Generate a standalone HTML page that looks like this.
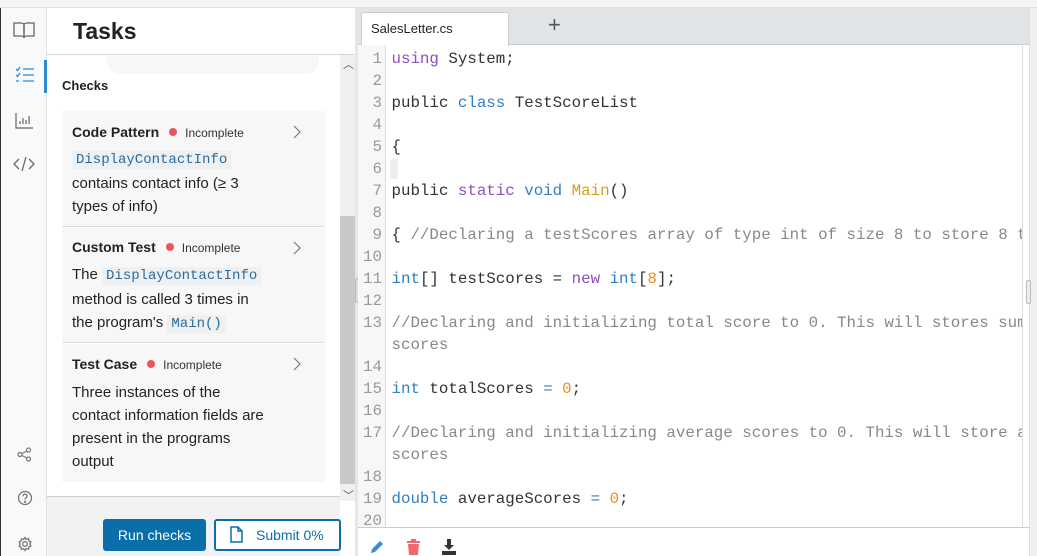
<!DOCTYPE html>
<html><head><style>
*{box-sizing:border-box;margin:0;padding:0}
body{width:1037px;height:556px;overflow:hidden;background:#f4f4f4;font-family:"Liberation Sans",sans-serif;position:relative;color:#222}
.abs{position:absolute}
.rail{left:0;top:8px;width:47px;height:548px;background:#f8f9fa;border-left:1px solid #333;border-right:1px solid #e2e2e2}
.panel{left:47px;top:8px;width:308px;height:548px;background:#fff}
.hdr{left:0;top:0;width:308px;height:47px;border-bottom:1px solid #d6d6d6;background:#fff}
.card{left:15px;width:263px;background:#f7f7f7}
.ct{font-weight:bold;font-size:14px;color:#222}
.dot{display:inline-block;width:8px;height:8px;border-radius:50%;background:#e8585a;margin:0 8px 0 10px;vertical-align:1px}
.inc{font-size:12px;font-weight:normal;color:#333}
.body{font-size:15px;line-height:23px;color:#222}
code{font-family:"Liberation Mono",monospace;font-size:14px;color:#2a6b9c;background:#eef0f2;padding:1px 4px}
.chev{position:absolute;left:231px;top:14px}
.ed{left:358px;top:8px;width:679px;height:548px;background:#fff}
.tabs{left:0;top:0;width:671px;height:37px;background:#e1e4e7;border-bottom:1px solid #ccc}
.tab{left:3px;top:4px;width:148px;height:34px;background:#fff;border:1px solid #ccc;border-bottom:none;border-radius:3px 3px 0 0;font-size:13px;padding:8px 0 0 9px;color:#222}
.code{left:-4px;top:40px;font-family:"Liberation Mono",monospace;font-size:15.8px;line-height:22px;white-space:pre}
.ln{width:28px;text-align:right;color:#999;display:inline-block}
.gut{left:0;top:37px;width:28px;height:482px;background:#f7f7f7;border-right:1px solid #ddd}
.k1{color:#8e4fbf}.k2{color:#2f7fc2}.fn{color:#d3a015}.nm{color:#f08a24}.cm{color:#888}.tx{color:#333}
</style></head><body>
<div class="abs" style="left:0;top:0;width:1037px;height:8px;background:#f4f4f4;border-bottom:1px solid #e0e0e0"></div>
<div class="abs rail">
<svg class="abs" style="left:12px;top:12px" width="22" height="20" viewBox="0 0 22 20" fill="none" stroke="#666" stroke-width="1.3"><path d="M1 3h7c2 0 3 1 3 2v13c0-1-1-2-3-2H1z"/><path d="M21 3h-7c-2 0-3 1-3 2v13c0-1 1-2 3-2h7z"/></svg>
<div class="abs" style="left:43px;top:52px;width:3px;height:33px;background:#2f8ad0"></div>
<svg class="abs" style="left:14px;top:58px" width="20" height="18" viewBox="0 0 20 18" fill="none" stroke="#2f8ad0" stroke-width="1.3"><path d="M1 3l1.5 1.5L5 1M1 9l1.5 1.5L5 7M1 15h3M8 3h11M8 9h11M8 15h11"/></svg>
<svg class="abs" style="left:14px;top:104px" width="19" height="17" viewBox="0 0 19 17" fill="none" stroke="#666" stroke-width="1.2"><path d="M1 1v15h17M5 12V9M8 12V6M11 12V8M14 12V4"/></svg>
<svg class="abs" style="left:12px;top:148px" width="22" height="16" viewBox="0 0 22 16" fill="none" stroke="#666" stroke-width="1.3"><path d="M6 3L1 8l5 5M16 3l5 5-5 5M13 1L9 15"/></svg>
<svg class="abs" style="left:16px;top:439px" width="15" height="15" viewBox="0 0 15 15" fill="none" stroke="#777" stroke-width="1.2"><circle cx="3" cy="7.5" r="2"/><circle cx="11.5" cy="3" r="2"/><circle cx="11.5" cy="12" r="2"/><path d="M5 6.5l5-2.5M5 8.5l5 2.5"/></svg>
<svg class="abs" style="left:16px;top:482px" width="16" height="16" viewBox="0 0 16 16" fill="none" stroke="#777" stroke-width="1.3"><circle cx="8" cy="8" r="6.5"/><path d="M6 6.3a2 2 0 1 1 2.5 1.8c-.5.2-.5.6-.5 1.4"/><circle cx="8" cy="11.8" r=".5" fill="#777"/></svg>
<svg class="abs" style="left:16px;top:528px" width="16" height="16" viewBox="0 0 16 16" fill="none" stroke="#777" stroke-width="1.3"><circle cx="8" cy="8" r="2.3"/><path d="M8 1.5l1.3 1.8 2.2-.6.4 2.2 2 1-1 2 1 2-2 1-.4 2.2-2.2-.6L8 14.5l-1.3-1.8-2.2.6-.4-2.2-2-1 1-2-1-2 2-1 .4-2.2 2.2.6z"/></svg>
</div>
<div class="abs panel">
<div class="abs hdr"><div class="abs" style="left:26px;top:10px;font-size:23px;font-weight:bold;color:#222">Tasks</div></div>
<div class="abs" style="left:60px;top:48px;width:212px;height:18px;background:#f7f7f7;border-radius:0 0 14px 14px"></div>
<div class="abs" style="left:15px;top:70px;font-size:13px;font-weight:bold">Checks</div>
<div class="abs card" style="top:103px;height:116px;border-bottom:1px solid #ddd">
<div class="abs" style="left:10px;top:13px"><span class="ct">Code Pattern</span><span class="dot"></span><span class="inc">Incomplete</span></div><svg class="chev" width="8" height="14" viewBox="0 0 8 14" fill="none" stroke="#777" stroke-width="1.2"><path d="M1 1l6 6-6 6"/></svg>
<div class="abs body" style="left:10px;top:36px;width:230px"><code>DisplayContactInfo</code><br>contains contact info (≥ 3<br>types of info)</div></div>
<div class="abs card" style="top:220px;height:115px;border-bottom:1px solid #ddd">
<div class="abs" style="left:10px;top:11px"><span class="ct">Custom Test</span><span class="dot"></span><span class="inc">Incomplete</span></div><svg class="chev" style="top:13px" width="8" height="14" viewBox="0 0 8 14" fill="none" stroke="#777" stroke-width="1.2"><path d="M1 1l6 6-6 6"/></svg>
<div class="abs body" style="left:10px;top:35px;width:240px">The <code>DisplayContactInfo</code><br>method is called 3 times in<br>the program's <code>Main()</code></div></div>
<div class="abs card" style="top:336px;height:138px">
<div class="abs" style="left:10px;top:12px"><span class="ct">Test Case</span><span class="dot"></span><span class="inc">Incomplete</span></div><svg class="chev" style="top:13px" width="8" height="14" viewBox="0 0 8 14" fill="none" stroke="#777" stroke-width="1.2"><path d="M1 1l6 6-6 6"/></svg>
<div class="abs body" style="left:10px;top:37px;width:240px">Three instances of the<br>contact information fields are<br>present in the programs<br>output</div></div>
<div class="abs" style="left:293px;top:47px;width:15px;height:446px;background:#f0f0f0"></div>
<div class="abs" style="left:293px;top:208px;width:15px;height:268px;background:#c8c8c8"></div>
<div class="abs" style="left:296px;top:48px;font-size:11px;color:#555">︿</div>
<div class="abs" style="left:296px;top:479px;font-size:11px;color:#555">﹀</div>
<div class="abs" style="left:0;top:488px;width:293px;height:60px;background:#f0f2f4;border-top:1px solid #ccc"></div>
<div class="abs" style="left:56px;top:511px;width:103px;height:32px;background:#0a6fa8;border-radius:3px;color:#fff;font-size:14px;text-align:center;line-height:32px">Run checks</div>
<div class="abs" style="left:167px;top:511px;width:127px;height:32px;border:2px solid #0a6fa8;border-radius:3px;background:#fff;color:#0a6fa8;font-size:14px;line-height:28px;padding-left:40px">Submit 0%</div>
<svg class="abs" style="left:183px;top:518px" width="13" height="17" viewBox="0 0 13 17" fill="none" stroke="#0a6fa8" stroke-width="1.5"><path d="M1 1h7l4 4v11H1zM8 1v4h4"/></svg>
</div>
<div class="abs" style="left:355px;top:8px;width:3px;height:548px;background:#e6e6e6"></div>
<div class="abs" style="left:355px;top:278px;width:4px;height:25px;background:#ddd;border:1px solid #bbb;border-radius:2px"></div>
<div class="abs ed">
<div class="abs tabs"></div>
<div class="abs tab">SalesLetter.cs</div>
<div class="abs" style="left:190px;top:4px;font-size:22px;color:#555">+</div>
<div class="abs gut"></div>
<div class="abs" style="left:32px;top:151px;width:8px;height:20px;background:#eee;border-radius:2px"></div>
<div class="abs code"><span class="ln">1</span> <span class="k1">using</span> <span class="tx">System;</span>
<span class="ln">2</span>
<span class="ln">3</span> <span class="tx">public</span> <span class="k2">class</span> <span class="tx">TestScoreList</span>
<span class="ln">4</span>
<span class="ln">5</span> <span class="tx">{</span>
<span class="ln">6</span>
<span class="ln">7</span> <span class="tx">public</span> <span class="k1">static</span> <span class="k2">void</span> <span class="fn">Main</span><span class="tx">()</span>
<span class="ln">8</span>
<span class="ln">9</span> <span class="tx">{</span> <span class="cm">//Declaring a testScores array of type int of size 8 to store 8 t</span>
<span class="ln">10</span>
<span class="ln">11</span> <span class="k2">int</span><span class="tx">[] testScores =</span> <span class="k1">new</span> <span class="k2">int</span><span class="tx">[</span><span class="nm">8</span><span class="tx">];</span>
<span class="ln">12</span>
<span class="ln">13</span> <span class="cm">//Declaring and initializing total score to 0. This will stores sum</span>
<span class="ln"></span> <span class="cm">scores</span>
<span class="ln">14</span>
<span class="ln">15</span> <span class="k2">int</span> <span class="tx">totalScores</span> <span class="k2">=</span> <span class="nm">0</span><span class="tx">;</span>
<span class="ln">16</span>
<span class="ln">17</span> <span class="cm">//Declaring and initializing average scores to 0. This will store a</span>
<span class="ln"></span> <span class="cm">scores</span>
<span class="ln">18</span>
<span class="ln">19</span> <span class="k2">double</span> <span class="tx">averageScores</span> <span class="k2">=</span> <span class="nm">0</span><span class="tx">;</span>
<span class="ln">20</span></div>
<div class="abs" style="left:664px;top:37px;width:7px;height:482px;background:#fff;border-left:1px solid #ddd"></div>
<div class="abs" style="left:671px;top:0;width:8px;height:548px;background:#f0f0f0;border-left:1px solid #ddd"></div>
<div class="abs" style="left:668px;top:272px;width:5px;height:24px;background:#eee;border:1px solid #bbb;border-radius:2px"></div>
<div class="abs" style="left:0;top:519px;width:671px;height:29px;background:#fff;border-top:1px solid #ccc"></div>
<svg class="abs" style="left:12px;top:532px" width="14" height="14" viewBox="0 0 14 14"><path d="M1 13l1-4 8-8 3 3-8 8z" fill="#3b8fd6"/></svg>
<svg class="abs" style="left:49px;top:531px" width="13" height="16" viewBox="0 0 13 16"><path d="M0 2h13v2H0zM4 0h5v2H4zM1 5h11l-1 11H2z" fill="#ef6b6b"/></svg>
<svg class="abs" style="left:84px;top:531px" width="14" height="16" viewBox="0 0 14 16"><path d="M5 0h4v6h3l-5 5-5-5h3zM0 12h14v4H0z" fill="#333"/></svg>
</div>
</body></html>
